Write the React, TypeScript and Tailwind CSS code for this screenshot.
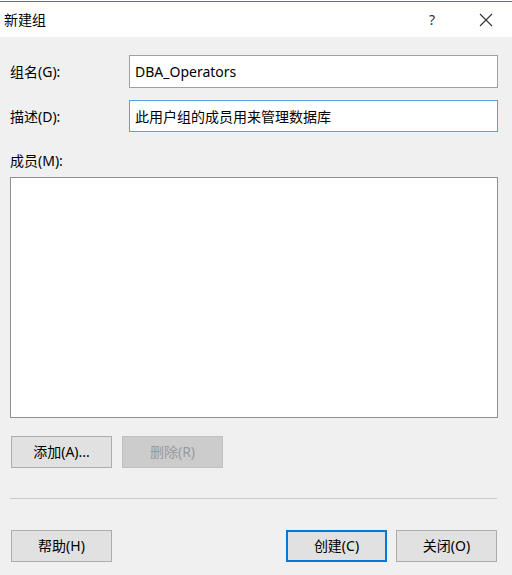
import React from "react";

const font = {
  fontFamily: '"Segoe UI", "Noto Sans", "Noto Sans CJK SC", sans-serif',
};

function DlgButton({
  label,
  disabled,
  primary,
}: {
  label: string;
  disabled?: boolean;
  primary?: boolean;
}) {
  const base =
    "flex h-[32px] w-[101px] items-center justify-center text-[14px] leading-none";
  if (disabled)
    return (
      <div className={`${base} border border-[#bfbfbf] bg-[#cccccc] text-[#9a9a9a]`}>
        {label}
      </div>
    );
  if (primary)
    return (
      <div className={`${base} border-2 border-[#0078d7] bg-[#e1e1e1] text-black`}>
        {label}
      </div>
    );
  return (
    <div className={`${base} border border-[#adadad] bg-[#e1e1e1] text-black`}>
      {label}
    </div>
  );
}

export default function App() {
  return (
    <div className="flex h-[575px] w-[512px] flex-col bg-[#f0f0f0] text-black" style={font}>
      <div className="h-px bg-white" />
      <div className="h-px bg-[#2b7bd0]" />

      {/* Title bar */}
      <div className="flex h-[35px] items-center bg-white pl-[4px]">
        <span className="text-[14px]">新建组</span>
        <span className="ml-auto mr-[44px] text-[14px] text-[#333]">?</span>
        <svg width="14" height="14" viewBox="0 0 14 14" className="mr-[19px]">
          <path d="M1 1 L13 13 M13 1 L1 13" stroke="#333" strokeWidth="1.1" />
        </svg>
      </div>

      <div className="flex flex-col px-[10px] pt-[18px]">
        {/* Group name */}
        <div className="flex items-center pr-[4px]">
          <span className="w-[119px] text-[14px]">组名(G):</span>
          <div className="flex h-[33px] flex-1 items-center border border-[#a0a0a0] bg-white px-[5px] text-[14px]">
            DBA_Operators
          </div>
        </div>

        {/* Description */}
        <div className="mt-[12px] flex items-center pr-[4px]">
          <span className="w-[119px] text-[14px]">描述(D):</span>
          <div className="flex h-[32px] flex-1 items-center border border-[#4ea3ea] bg-white px-[5px] text-[14px]">
            此用户组的成员用来管理数据库
          </div>
        </div>

        {/* Members */}
        <div className="mt-[19px] h-[20px] text-[14px] leading-[20px]">成员(M):</div>
        <div className="mr-[4px] mt-[6px] h-[241px] border border-[#8f8f8f] bg-white" />

        <div className="mt-[18px] flex gap-[10px] pl-px">
          <DlgButton label="添加(A)..." />
          <DlgButton label="删除(R)" disabled />
        </div>

        <div className="mr-[5px] mt-[30px] h-px bg-[#c8c8c8]" />

        <div className="mt-[31px] flex pl-px pr-[5px]">
          <DlgButton label="帮助(H)" />
          <div className="flex-1" />
          <DlgButton label="创建(C)" primary />
          <div className="w-[9px]" />
          <DlgButton label="关闭(O)" />
        </div>
      </div>
    </div>
  );
}
